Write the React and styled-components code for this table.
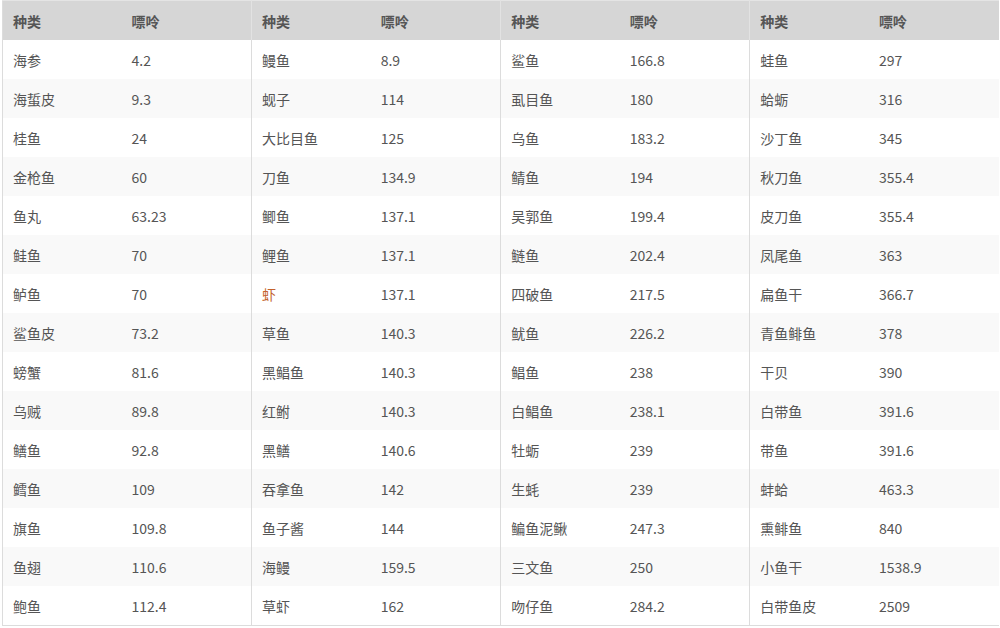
import React from "react";
import styled, { createGlobalStyle } from "styled-components";

const Global = createGlobalStyle`
  html, body { margin: 0; padding: 0; background: #fff; }
  body { font-family: "Noto Sans CJK SC", "Noto Sans", sans-serif; }
`;

const Wrap = styled.div`
  padding: 0 0 0 2px;
`;

const Table = styled.table`
  border-collapse: collapse;
  table-layout: fixed;
  width: 997px;
  border-top: 1px solid #e4e4e4;
  border-left: 1px solid #dcdcdc;
  border-bottom: 1px solid #dcdcdc;
  font-size: 14px;
  color: #555;
`;

const Head = styled.th`
  height: 39px;
  padding: 0 0 0 10px;
  text-align: left;
  font-weight: bold;
  color: #555;
  background: #d6d6d6;
  border-left: ${(p) => (p.$sep ? "1px solid #e2e2e2" : "none")};
`;

const Row = styled.tr`
  background: ${(p) => (p.$odd ? "#f9f9f9" : "#fff")};
`;

const Cell = styled.td`
  height: 39px;
  padding: 0 0 0 10px;
  vertical-align: middle;
  white-space: nowrap;
  color: ${(p) => (p.$accent ? "#c4622c" : "#555")};
  border-left: ${(p) => (p.$sep ? "1px solid #dcdcdc" : "none")};
`;

const groups = [
  [["海参","4.2"],["海蜇皮","9.3"],["桂鱼","24"],["金枪鱼","60"],["鱼丸","63.23"],["鲑鱼","70"],["鲈鱼","70"],["鲨鱼皮","73.2"],["螃蟹","81.6"],["乌贼","89.8"],["鳝鱼","92.8"],["鳕鱼","109"],["旗鱼","109.8"],["鱼翅","110.6"],["鲍鱼","112.4"]],
  [["鳗鱼","8.9"],["蚬子","114"],["大比目鱼","125"],["刀鱼","134.9"],["鲫鱼","137.1"],["鲤鱼","137.1"],["虾","137.1"],["草鱼","140.3"],["黑鲳鱼","140.3"],["红鲋","140.3"],["黑鳝","140.6"],["吞拿鱼","142"],["鱼子酱","144"],["海鳗","159.5"],["草虾","162"]],
  [["鲨鱼","166.8"],["虱目鱼","180"],["乌鱼","183.2"],["鲭鱼","194"],["吴郭鱼","199.4"],["鲢鱼","202.4"],["四破鱼","217.5"],["鱿鱼","226.2"],["鲳鱼","238"],["白鲳鱼","238.1"],["牡蛎","239"],["生蚝","239"],["鳊鱼泥鳅","247.3"],["三文鱼","250"],["吻仔鱼","284.2"]],
  [["蛙鱼","297"],["蛤蛎","316"],["沙丁鱼","345"],["秋刀鱼","355.4"],["皮刀鱼","355.4"],["凤尾鱼","363"],["扁鱼干","366.7"],["青鱼鲱鱼","378"],["干贝","390"],["白带鱼","391.6"],["带鱼","391.6"],["蚌蛤","463.3"],["熏鲱鱼","840"],["小鱼干","1538.9"],["白带鱼皮","2509"]],
];

export default function App() {
  const rows = groups[0].map((_, i) => i);
  return (
    <Wrap>
      <Global />
      <Table>
        <colgroup>
          {groups.map((_, g) => (
            <React.Fragment key={g}>
              <col style={{ width: 119 }} />
              <col style={{ width: 130 }} />
            </React.Fragment>
          ))}
        </colgroup>
        <thead>
          <tr>
            {groups.map((_, g) => (
              <React.Fragment key={g}>
                <Head $sep={g > 0}>种类</Head>
                <Head>嘌呤</Head>
              </React.Fragment>
            ))}
          </tr>
        </thead>
        <tbody>
          {rows.map((i) => (
            <Row key={i} $odd={i % 2 === 1}>
              {groups.map((grp, g) => (
                <React.Fragment key={g}>
                  <Cell $sep={g > 0} $accent={grp[i][0] === "虾"}>{grp[i][0]}</Cell>
                  <Cell>{grp[i][1]}</Cell>
                </React.Fragment>
              ))}
            </Row>
          ))}
        </tbody>
      </Table>
    </Wrap>
  );
}
